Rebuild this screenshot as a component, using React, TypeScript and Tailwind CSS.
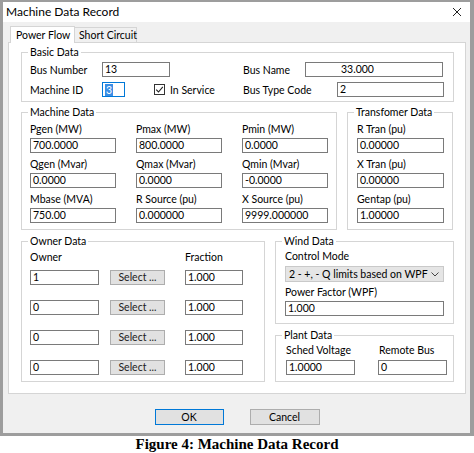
import React from "react";

const F = { fontFamily: "Lato, 'Liberation Sans', sans-serif" };

function Input({ w, text, className = "", pl = 2 }: { w: number; text: string; className?: string; pl?: number }) {
  return (
    <div
      className={"h-[15px] border border-[#7a7a7a] bg-white flex items-center text-[10.5px] leading-[13px] text-black overflow-hidden whitespace-nowrap " + className}
      style={{ width: w, paddingLeft: pl }}
    >
      {text}
    </div>
  );
}

function Group({ label, className = "", children }: { label: string; className?: string; children?: React.ReactNode }) {
  return (
    <div className={"relative border border-[#d5d5d5] " + className}>
      <span className="absolute -top-[8px] left-[6px] bg-white px-[2px] text-[10.5px] leading-[14px] text-black whitespace-nowrap">
        {label}
      </span>
      {children}
    </div>
  );
}

function Label({ text, className = "" }: { text: string; className?: string }) {
  return <div className={"h-[14px] text-[10.5px] leading-[14px] text-black whitespace-nowrap " + className}>{text}</div>;
}

function Field({ label, value, w }: { label: string; value: string; w: number }) {
  return (
    <div className="flex flex-col" style={{ width: w }}>
      <Label text={label} />
      <div className="h-[2px]" />
      <Input w={w} text={value} />
    </div>
  );
}

function SelectBtn() {
  return (
    <div className="w-[55px] h-[15px] bg-[#e1e1e1] border border-[#adadad] flex items-center justify-center text-[10.5px] leading-[13px] text-[#222] whitespace-nowrap">
      Select ...
    </div>
  );
}

export default function App() {
  const owners = ["1", "0", "0", "0"];
  return (
    <div className="w-[474px] h-[453px] bg-white overflow-hidden" style={F}>
      <div className="h-[436px] flex flex-col bg-[#f0f0f0] border-[#9d9d9d] border-l-[3px] border-r-[4px] border-t-[2px] border-b-[3px]">
        {/* title bar */}
        <div className="h-[20px] bg-white flex items-center justify-between pl-[3px] pr-[8px]">
          <span className="text-[12px] leading-[16px] text-black">Machine Data Record</span>
          <svg width="10" height="10" viewBox="0 0 10 10">
            <path d="M1 1 L9 9 M9 1 L1 9" stroke="#222" strokeWidth="1" fill="none" />
          </svg>
        </div>
        {/* body */}
        <div className="flex-1 flex flex-col pl-[5px] pr-[4px]">
          {/* tabs */}
          <div className="h-[20px] flex items-end pl-[2px]">
            <div className="relative z-10 h-[17px] -mb-px w-[65px] bg-white border border-b-0 border-[#d5d5d5] flex items-center pl-[5px] text-[10.5px] leading-[14px] text-black whitespace-nowrap">
              Power Flow
            </div>
            <div className="h-[15px] w-[63px] -ml-px border border-b-0 border-[#d5d5d5] bg-[#f0f0f0] flex items-center pl-[4px] text-[10.5px] leading-[14px] text-black whitespace-nowrap">
              Short Circuit
            </div>
          </div>
          {/* panel */}
          <div className="h-[352px] bg-white border border-[#d5d5d5] pl-[12px] pt-[9px]">
            {/* Basic Data */}
            <Group label="Basic Data" className="w-[433px] h-[50px] pt-[9px] pl-[8px]">
              <div className="flex">
                <div className="w-[213px] flex flex-col gap-[5px]">
                  <div className="flex items-center h-[15px]">
                    <Label text="Bus Number" className="w-[72px]" />
                    <Input w={68} text="13" />
                  </div>
                  <div className="flex items-center h-[15px]">
                    <Label text="Machine ID" className="w-[72px]" />
                    <div className="w-[23px] h-[15px] border border-[#0078d7] bg-white flex items-center pl-[2px]">
                      <span className="bg-[#3a8ee6] text-white text-[10.5px] leading-[12px] px-[1px]">3</span>
                    </div>
                    <div className="ml-[29px] w-[11px] h-[11px] border border-[#333] bg-white flex items-center justify-center">
                      <svg width="9" height="9" viewBox="0 0 9 9">
                        <path d="M1.2 4.6 L3.5 7 L7.8 1.8" stroke="#222" strokeWidth="1.1" fill="none" />
                      </svg>
                    </div>
                    <Label text="In Service" className="ml-[5px]" />
                  </div>
                </div>
                <div className="flex flex-col gap-[5px]">
                  <div className="flex items-center h-[15px]">
                    <Label text="Bus Name" className="w-[62px]" />
                    <Input w={138} text="33.000" pl={35} />
                  </div>
                  <div className="flex items-center h-[15px]">
                    <Label text="Bus Type Code" className="w-[94px]" />
                    <Input w={107} text="2" />
                  </div>
                </div>
              </div>
            </Group>

            {/* Machine + Transformer */}
            <div className="flex gap-[10px] mt-[10px]">
              <Group label="Machine Data" className="w-[316px] h-[118px] pt-[9px] pl-[8px]">
                <div className="grid grid-cols-[86px_86px_86px] gap-x-[20px] gap-y-[4px]">
                  <Field label="Pgen (MW)" value="700.0000" w={86} />
                  <Field label="Pmax (MW)" value="800.0000" w={86} />
                  <Field label="Pmin (MW)" value="0.0000" w={86} />
                  <Field label="Qgen (Mvar)" value="0.0000" w={86} />
                  <Field label="Qmax (Mvar)" value="0.0000" w={86} />
                  <Field label="Qmin (Mvar)" value="-0.0000" w={86} />
                  <Field label="Mbase (MVA)" value="750.00" w={86} />
                  <Field label="R Source (pu)" value="0.000000" w={86} />
                  <Field label="X Source (pu)" value="9999.000000" w={86} />
                </div>
              </Group>
              <Group label="Transfomer Data" className="w-[106px] h-[118px] pt-[9px] pl-[9px]">
                <div className="flex flex-col gap-[4px]">
                  <Field label="R Tran (pu)" value="0.00000" w={87} />
                  <Field label="X Tran (pu)" value="0.00000" w={87} />
                  <Field label="Gentap (pu)" value="1.00000" w={87} />
                </div>
              </Group>
            </div>

            {/* Owner + Wind/Plant */}
            <div className="flex gap-[10px] mt-[11px]">
              <Group label="Owner Data" className="w-[244px] h-[141px] pt-[8px] pl-[8px]">
                <div className="flex h-[14px]">
                  <Label text="Owner" className="w-[155px]" />
                  <Label text="Fraction" />
                </div>
                <div className="flex flex-col gap-[15px] mt-[6px]">
                  {owners.map((o, i) => (
                    <div key={i} className="flex items-center">
                      <Input w={69} text={o} />
                      <div className="ml-[11px]">
                        <SelectBtn />
                      </div>
                      <div className="ml-[20px]">
                        <Input w={58} text="1.000" />
                      </div>
                    </div>
                  ))}
                </div>
              </Group>
              <div className="flex flex-col gap-[11px]">
                <Group label="Wind Data" className="w-[179px] h-[83px] pt-[7px] pl-[9px]">
                  <Label text="Control Mode" />
                  <div className="mt-[3px] w-[159px] h-[16px] bg-[#e5e5e5] border border-[#c9c9c9] flex items-center justify-between pl-[3px] pr-[4px] text-[10.5px] leading-[13px] text-black whitespace-nowrap">
                    <span>2 - +, - Q limits based on WPF</span>
                    <svg width="8" height="5" viewBox="0 0 8 5">
                      <path d="M0.5 0.5 L4 4 L7.5 0.5" stroke="#444" strokeWidth="1" fill="none" />
                    </svg>
                  </div>
                  <Label text="Power Factor (WPF)" className="mt-[3px]" />
                  <div className="mt-[2px]">
                    <Input w={159} text="1.000" />
                  </div>
                </Group>
                <Group label="Plant Data" className="w-[179px] h-[47px] pt-[7px] pl-[10px]">
                  <div className="flex">
                    <Label text="Sched Voltage" className="w-[93px]" />
                    <Label text="Remote Bus" />
                  </div>
                  <div className="flex gap-[23px] mt-[3px]">
                    <Input w={69} text="1.0000" />
                    <Input w={69} text="0" />
                  </div>
                </Group>
              </div>
            </div>
          </div>
          {/* buttons */}
          <div className="flex justify-center gap-[26px] pt-[15px]">
            <div className="w-[69px] h-[16px] bg-[#e1e1e1] border border-[#0078d7] flex items-center justify-center text-[10.5px] leading-[13px] text-black">
              OK
            </div>
            <div className="w-[70px] h-[16px] bg-[#e1e1e1] border border-[#adadad] flex items-center justify-center text-[10.5px] leading-[13px] text-black">
              Cancel
            </div>
          </div>
        </div>
      </div>
      <div
        className="h-[17px] flex items-center justify-center text-[15px] leading-[17px] font-bold text-black"
        style={{ fontFamily: "'Liberation Serif', serif" }}
      >
        Figure 4: Machine Data Record
      </div>
    </div>
  );
}
